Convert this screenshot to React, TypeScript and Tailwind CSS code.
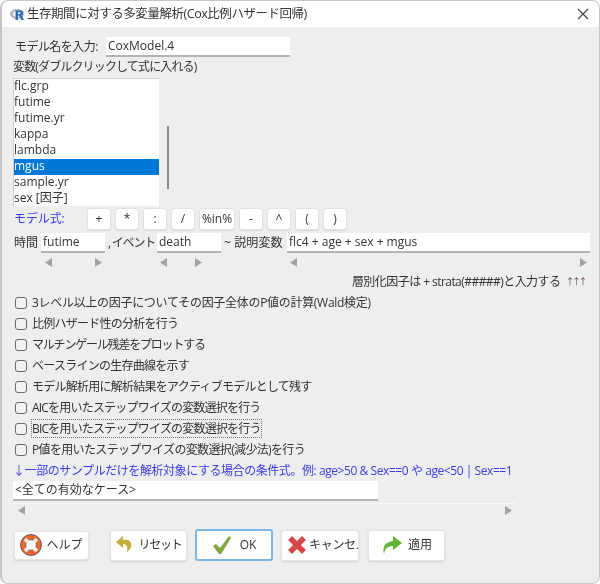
import React from "react";

const font = { fontFamily: '"Open Sans","Noto Sans CJK JP",sans-serif' };

function Field({ w, text, cls = "" }: { w: string; text: string; cls?: string }) {
  return (
    <div className={`${w} ${cls} h-[20px] bg-white border-b-2 border-[#b4b4b4] pl-[2px] text-[12px] leading-[18px] text-[#333] whitespace-nowrap overflow-hidden`}>
      {text}
    </div>
  );
}

function Arrows({ w, cls = "" }: { w: string; cls?: string }) {
  return (
    <div className={`${w} ${cls} flex justify-between`}>
      <svg width="7" height="9" viewBox="0 0 7 9"><path d="M7 0v9L0 4.500z" fill="#a3a3a3" /></svg>
      <svg width="7" height="9" viewBox="0 0 7 9"><path d="M0 0v9l7-4.500z" fill="#a3a3a3" /></svg>
    </div>
  );
}

function Op({ t, w = "w-[24px]" }: { t: string; w?: string }) {
  return (
    <div className={`${w} h-[22px] bg-white border border-[#e2e2e2] rounded-[3px] shadow-[0_1px_1px_#d8d8d8] flex items-center justify-center text-[12px] text-[#333]`}>
      {t}
    </div>
  );
}

function Check({ t, track, focus }: { t: string; track: string; focus?: boolean }) {
  return (
    <div className="h-[21px] flex items-center">
      <div className="w-[12px] h-[12px] ml-[2px] mr-[5px] rounded-[3px] border border-[#6a6a6a] bg-[#f2f2f2] shrink-0" />
      <span className={`text-[12px] leading-[17px] text-[#333] whitespace-nowrap ${track} ${focus ? "outline outline-1 outline-dotted outline-[#777]" : ""}`}>{t}</span>
    </div>
  );
}

function Btn({ w, h = "h-[29px]", icon, label, cls = "", labelCls = "", border = "border border-[#e4e4e4] shadow-[0_1px_2px_#cfcfcf]" }: { w: string; h?: string; icon: React.ReactNode; label: string; cls?: string; labelCls?: string; border?: string }) {
  return (
    <div className={`${w} ${h} ${border} ${cls} bg-white rounded-[3px] flex items-center justify-center gap-[4px] text-[12px] text-[#333] overflow-hidden whitespace-nowrap`}>
      {icon}
      <span className={labelCls}>{label}</span>
    </div>
  );
}

export default function App() {
  const items = ["flc.grp", "futime", "futime.yr", "kappa", "lambda", "mgus", "sample.yr", "sex [因子]"];
  const checks: [string, string][] = [
    ["3レベル以上の因子についてその因子全体のP値の計算(Wald検定)", "tracking-[-0.3px]"],
    ["比例ハザード性の分析を行う", "tracking-[-0.75px]"],
    ["マルチンゲール残差をプロットする", "tracking-[-1.2px]"],
    ["ベースラインの生存曲線を示す", "tracking-[-0.75px]"],
    ["モデル解析用に解析結果をアクティブモデルとして残す", "tracking-[-0.75px]"],
    ["AICを用いたステップワイズの変数選択を行う", "tracking-[-0.8px]"],
    ["BICを用いたステップワイズの変数選択を行う", "tracking-[-0.8px]"],
    ["P値を用いたステップワイズの変数選択(減少法)を行う", "tracking-[-0.65px]"],
  ];
  return (
    <div className="w-[600px] h-[584px] bg-white overflow-hidden blur-[0.3px]" style={font}>
      <div className="w-full h-full rounded-[8px] border-l-2 border-r border-t border-b border-[#c6c6c6] overflow-hidden flex flex-col bg-[#eeeeee]">
        <div className="h-[26px] shrink-0 bg-white flex items-center pl-[8px] pr-[10px]">
          <svg width="15" height="13" viewBox="0 0 15 13" className="mr-[2px] shrink-0">
            <ellipse cx="7" cy="6" rx="7" ry="5" fill="#b5b7bd" />
            <ellipse cx="7.500" cy="6" rx="4.500" ry="3" fill="#fff" />
            <path d="M5.500 2.500h5.200c3.200 0 3.200 4.200.8 4.600l2.500 4.900h-2.700L8.900 7.400H8V12H5.500zM8 4.300v1.600h1.800c1 0 1-1.600 0-1.600z" fill="#276dc3" />
          </svg>
          <span className="text-[12.5px] text-[#333] tracking-[-0.46px] whitespace-nowrap">生存期間に対する多変量解析(Cox比例ハザード回帰)</span>
          <svg width="12" height="12" viewBox="0 0 12 12" className="ml-auto"><path d="M1 1l10 10M11 1L1 11" stroke="#444" strokeWidth="1.200" /></svg>
        </div>
        <div className="flex-1 flex flex-col pl-[11px] pt-[10px] relative">
          <div className="flex items-center h-[20px]">
            <span className="w-[93px] pl-[2px] text-[12px] text-[#333] tracking-[-0.55px]">モデル名を入力:</span>
            <Field w="w-[184px]" text="CoxModel.4" />
          </div>
          <div className="h-[20px] text-[12px] leading-[19px] text-[#333] tracking-[-0.85px]">変数(ダブルクリックして式に入れる)</div>
          <div className="flex h-[128px] mt-[1px]">
            <div className="w-[146px] h-[128px] bg-white border-t border-l border-[#d0d0d0] overflow-hidden">
              {items.map((s) => (
                <div key={s} className={`h-[16px] text-[12px] leading-[14px] whitespace-nowrap ${s === "mgus" ? "bg-[#0078d7] text-white" : "text-[#333]"}`}>{s}</div>
              ))}
            </div>
            <div className="w-[2px] h-[63px] mt-[48px] ml-[8px] bg-[#8a8a8a]" />
          </div>
          <div className="flex items-center h-[24px] mt-[1px]">
            <span className="w-[74px] pl-[1px] text-[12px] text-[#3a3af0] tracking-[-0.1px]">モデル式:</span>
            <div className="flex gap-[4px]">
              <Op t="+" /><Op t="*" /><Op t=":" /><Op t="/" /><Op t="%in%" w="w-[36px]" /><Op t="-" /><Op t="^" /><Op t="(" /><Op t=")" />
            </div>
          </div>
          <div className="flex items-center h-[20px] mt-[2px]">
            <span className="w-[28px] pl-[1px] text-[12px] text-[#333]">時間</span>
            <Field w="w-[64px]" text="futime" />
            <span className="w-[52px] pl-[3px] text-[12px] text-[#333] tracking-[-1.2px] whitespace-nowrap">, イベント</span>
            <Field w="w-[64px]" text="death" />
            <span className="w-[66px] pl-[3px] text-[12px] text-[#333] tracking-[0.1px] whitespace-nowrap">~ 説明変数</span>
            <Field w="w-[303px]" text="flc4 + age + sex + mgus" />
          </div>
          <div className="flex h-[10px] mt-[5px]">
            <Arrows w="w-[57px]" cls="ml-[32px]" />
            <Arrows w="w-[42px]" cls="ml-[58px]" />
            <Arrows w="w-[297px]" cls="ml-[88px]" />
          </div>
          <div className="h-[18px] mt-[5px] w-[574px] flex justify-end items-center text-[12px] leading-[18px] text-[#333] tracking-[-0.55px] whitespace-nowrap">
            <span>層別化因子は + strata(#####)と入力する</span>
            <span className="ml-[5px] text-[9px] tracking-[-2.5px] pr-[2px] text-[#6b4a3a]">↑↑↑</span>
          </div>
          <div className="mt-[1px]">
            {checks.map(([c, tr]) => (
              <Check key={c} t={c} track={tr} focus={c.startsWith("BIC")} />
            ))}
          </div>
          <div className="h-[18px] mt-[2px] text-[12px] leading-[18px] text-[#3a3af0] tracking-[-0.43px] whitespace-nowrap">↓一部のサンプルだけを解析対象にする場合の条件式。例: age&gt;50 &amp; Sex==0 や age&lt;50 | Sex==1</div>
          <Field w="w-[365px]" text="<全ての有効なケース>" cls="mt-[1px]" />
          <div className="w-[503px] h-[1px] mt-[2px] bg-[#f8f8f8]" />
          <Arrows w="w-[494px]" cls="mt-[2px] ml-[5px]" />
          <div className="flex items-center mt-[14px] ml-[1px]">
            <Btn w="w-[75px]" h="h-[29px]" label="ヘルプ" icon={
              <svg width="22" height="22" viewBox="0 0 22 22">
                <circle cx="11" cy="11" r="8" fill="none" stroke="#f0652a" strokeWidth="5" />
                <circle cx="11" cy="11" r="10.500" fill="none" stroke="#4a4060" strokeWidth="0.800" />
                <circle cx="11" cy="11" r="5.300" fill="none" stroke="#4a4060" strokeWidth="0.800" />
                <path d="M5 5l3 3M17 5l-3 3M5 17l3-3M17 17l-3-3" stroke="#f4f4f4" strokeWidth="3.500" />
              </svg>
            } />
            <Btn w="w-[77px]" cls="ml-[21px]" h="h-[31px]" label="リセット" labelCls="tracking-[-1.2px]" icon={
              <svg width="18" height="20" viewBox="0 0 18 20" className="mr-[1px]"><path d="M8 1L1 7l7 6V9c3 0 5 2 4 8 3-2 5-5 4-9-1-3-4-4-8-3z" fill="#c9ad35" /></svg>
            } />
            <Btn w="w-[78px]" cls="ml-[8px]" h="h-[32px]" border="border-2 border-[#7ab8e8]" label="OK" icon={
              <svg width="20" height="20" viewBox="0 0 20 20" className="mr-[4px]"><path d="M1 11l3-2 4 4L17 1l2 2L9 19H7z" fill="#7fa83a" /></svg>
            } />
            <Btn w="w-[78px]" cls="ml-[8px] justify-start pl-[5px] !gap-[2px]" h="h-[31px]" label="キャンセル" labelCls="tracking-[-0.3px]" icon={
              <svg width="20" height="20" viewBox="0 0 20 20" className="shrink-0"><path d="M3 3l14 14M17 3L3 17" stroke="#d94545" strokeWidth="5.500" /></svg>
            } />
            <Btn w="w-[77px]" cls="ml-[9px]" h="h-[31px]" label="適用" icon={
              <svg width="22" height="20" viewBox="0 0 22 20" className="mr-[1px]"><path d="M12 1l9 7-9 7v-4c-5 0-8 2-9 8-2-7 1-12 9-13z" fill="#5cb82e" /></svg>
            } />
          </div>
        </div>
      </div>
    </div>
  );
}
